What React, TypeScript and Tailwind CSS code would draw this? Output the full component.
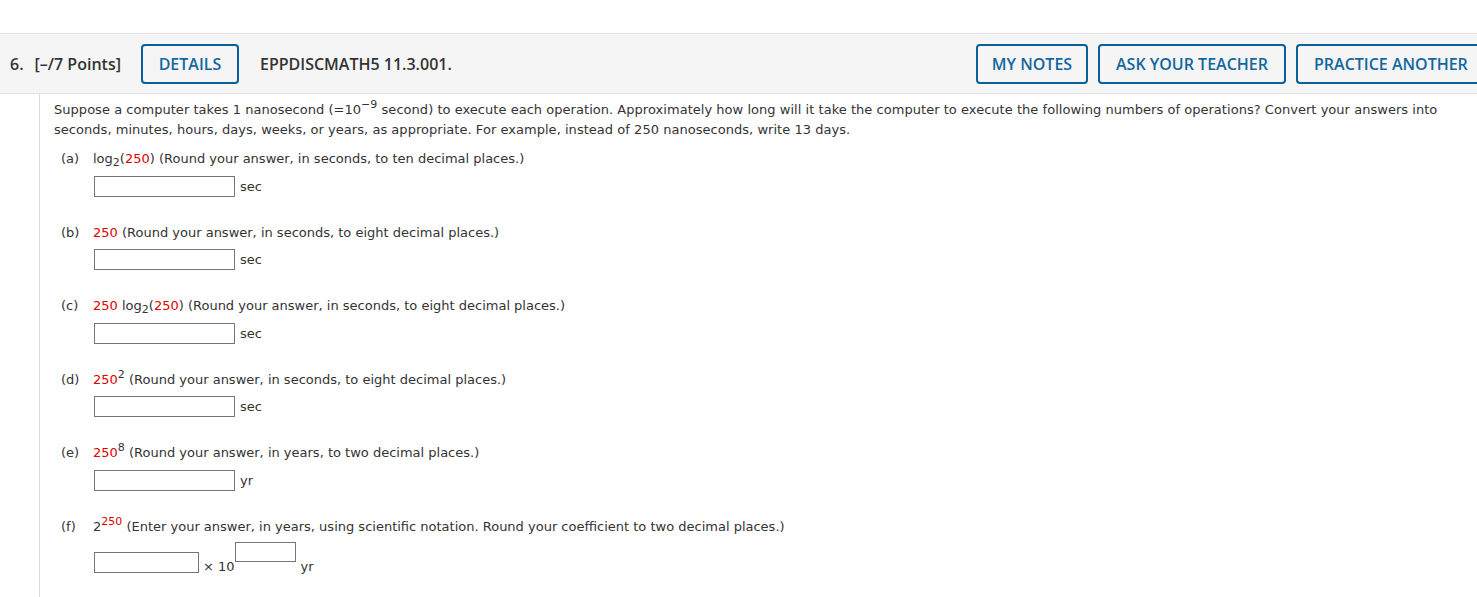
const red = "text-[#e00000]";
const supCls = "text-[11px] relative -top-[6px]";
const subCls = "text-[11px] relative top-[3px]";

function Answer({ unit }: { unit: string }) {
  return (
    <div className="mt-[7px] flex items-center pl-[40px]">
      <div className="h-[21px] w-[141px] border border-[#767676] bg-white" />
      <span className="ml-[5px] mt-[1px]">{unit}</span>
    </div>
  );
}

function Part({
  tag,
  expr,
  note,
  unit,
}: {
  tag: string;
  expr: React.ReactNode;
  note: string;
  unit: string;
}) {
  return (
    <div className="mb-[26px]">
      <div className="flex pl-[7px]">
        <span className="w-[32px]">({tag})</span>
        <span>
          {expr} {note}
        </span>
      </div>
      <Answer unit={unit} />
    </div>
  );
}

function Log() {
  return (
    <>
      log<sub className={subCls}>2</sub>(<span className={red}>250</span>)
    </>
  );
}

export default function App() {
  const btn =
    "h-[40px] whitespace-nowrap rounded-[4px] border-2 border-[#0b6196] px-[12px] text-[#13679f] text-[16px] font-semibold bg-[#f5f5f5]";
  return (
    <div className="h-[597px] w-[1477px] overflow-hidden bg-white text-[#333]">
      <div className="mt-[33px] flex h-[61px] items-center border-y border-[#e3e3e3] bg-[#f5f5f5] pl-[10px] font-['Open_Sans',sans-serif] text-[16px] font-semibold">
        <span>6.</span>
        <span className="ml-[11px]">[–/7 Points]</span>
        <button className={`${btn} ml-[20px] w-[98px]`}>DETAILS</button>
        <span className="ml-[21px]">EPPDISCMATH5 11.3.001.</span>
        <div className="ml-auto flex gap-[10px] pr-0">
          <button className={`${btn} w-[112px]`}>MY NOTES</button>
          <button className={`${btn} w-[188px]`}>ASK YOUR TEACHER</button>
          <button className={`${btn} w-[181px] rounded-r-none border-r-0 text-left pl-[16px]`}>PRACTICE ANOTHER</button>
        </div>
      </div>
      <div className="ml-[39px] h-full border-l border-[#d9d9d9] pl-[14px] pt-[6px] font-['DejaVu_Sans',Verdana,sans-serif] text-[13px] leading-[19.5px]">
        <p className="whitespace-nowrap tracking-[0.035px]">
          Suppose a computer takes 1 nanosecond (=10<sup className={supCls}>−9</sup> second) to execute each operation. Approximately how long will it take the computer to execute the following numbers of operations? Convert your answers into
          <br />
          seconds, minutes, hours, days, weeks, or years, as appropriate. For example, instead of 250 nanoseconds, write 13 days.
        </p>
        <div className="mt-[10px]">
          <Part tag="a" expr={<Log />} note="(Round your answer, in seconds, to ten decimal places.)" unit="sec" />
          <Part tag="b" expr={<span className={red}>250</span>} note="(Round your answer, in seconds, to eight decimal places.)" unit="sec" />
          <Part
            tag="c"
            expr={
              <>
                <span className={red}>250</span> <Log />
              </>
            }
            note="(Round your answer, in seconds, to eight decimal places.)"
            unit="sec"
          />
          <Part
            tag="d"
            expr={
              <>
                <span className={red}>250</span>
                <sup className={supCls}>2</sup>
              </>
            }
            note="(Round your answer, in seconds, to eight decimal places.)"
            unit="sec"
          />
          <Part
            tag="e"
            expr={
              <>
                <span className={red}>250</span>
                <sup className={supCls}>8</sup>
              </>
            }
            note="(Round your answer, in years, to two decimal places.)"
            unit="yr"
          />
          <div>
            <div className="flex pl-[7px]">
              <span className="w-[32px]">(f)</span>
              <span>
                2<sup className={`${red} ${supCls}`}>250</sup> (Enter your answer, in years, using scientific notation. Round your coefficient to two decimal places.)
              </span>
            </div>
            <div className="mt-[6px] flex items-end pl-[40px]">
              <div className="h-[21px] w-[105px] border border-[#767676] bg-white" />
              <span className="ml-[4px] mb-[-3px]">× 10</span>
              <div className="mb-[11px] h-[20px] w-[61px] border border-[#767676] bg-white" />
              <span className="ml-[5px] mb-[-3px]">yr</span>
            </div>
          </div>
        </div>
      </div>
    </div>
  );
}
